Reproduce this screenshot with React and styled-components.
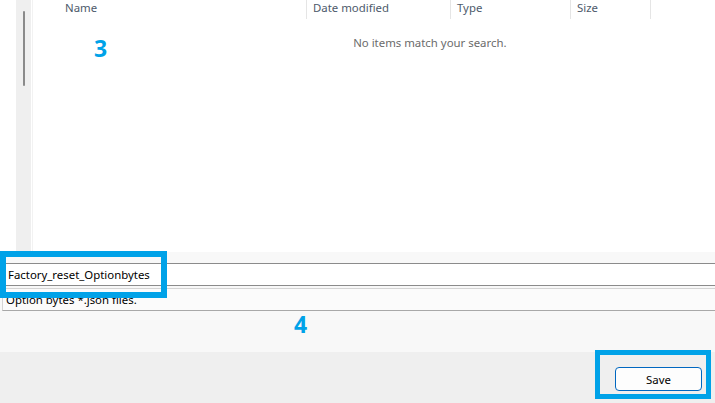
import React from 'react';
import styled, { createGlobalStyle } from 'styled-components';

const GlobalStyle = createGlobalStyle`
  html, body {
    margin: 0;
    padding: 0;
    background: #ffffff;
  }
  body {
    font-family: "Noto Sans", "Open Sans", sans-serif;
    font-size: 11.4px;
  }
`;

const columns = [
  { label: 'Name', width: 274, pad: 32 },
  { label: 'Date modified', width: 144, pad: 6 },
  { label: 'Type', width: 120, pad: 6 },
  { label: 'Size', width: 80, pad: 6 },
];

const Dialog = styled.div`
  position: relative;
  width: 715px;
  height: 403px;
  overflow: hidden;
  display: flex;
  flex-direction: column;
  background: #ffffff;
`;

const Browser = styled.div`
  height: 252px;
  display: flex;
`;

const NavGap = styled.div`
  width: 16px;
  background: #ffffff;
`;

const ScrollTrack = styled.div`
  width: 16px;
  background: #efefef;
  display: flex;
  justify-content: center;
  padding-top: 11px;
  box-sizing: border-box;
  border-right: 1px solid #ffffff;
`;

const ScrollThumb = styled.div`
  width: 2px;
  height: 75px;
  border-radius: 1px;
  background: #8a8a8a;
  margin-left: 1px;
`;

const Divider = styled.div`
  width: 1px;
  background: #f2f2f2;
`;

const Listing = styled.div`
  flex: 1;
  display: flex;
  flex-direction: column;
`;

const HeaderRow = styled.div`
  display: flex;
  height: 19px;
`;

const HeaderCell = styled.div`
  width: ${(p) => p.$width}px;
  padding-left: ${(p) => p.$pad}px;
  box-sizing: border-box;
  border-right: 1px solid #e5e5e5;
  color: #4d5a6b;
  font-size: 11.4px;
  line-height: 15px;
  white-space: nowrap;
`;

const Body = styled.div`
  display: flex;
  align-items: flex-start;
  padding-top: 14px;
`;

const Marker = styled.div`
  color: #00a2e8;
  font-family: "Open Sans", "Noto Sans", sans-serif;
  font-weight: 700;
  font-size: 23px;
  line-height: 30px;
`;

const EmptyMessage = styled.div`
  color: #6b6b6b;
  font-size: 11.4px;
  line-height: 16px;
  padding-top: 2px;
  margin-left: 246px;
`;

const FormPanel = styled.div`
  height: 100px;
  background: #f8f8f8;
  padding-top: 11px;
  box-sizing: border-box;
  display: flex;
  flex-direction: column;
  gap: 2px;
`;

const NameInput = styled.div`
  height: 23px;
  box-sizing: border-box;
  margin-left: 2px;
  background: #ffffff;
  border-top: 1px solid #8b8b8b;
  border-bottom: 1px solid #8b8b8b;
  border-left: 1px solid #8b8b8b;
  padding-left: 5px;
  color: #000000;
  font-size: 11.4px;
  line-height: 21px;
  white-space: nowrap;
`;

const TypeSelect = styled.div`
  height: 23px;
  box-sizing: border-box;
  margin-left: 2px;
  background: #fbfbfb;
  border-top: 1px solid #d4d4d4;
  border-bottom: 1px solid #a8a8a8;
  border-left: 1px solid #d4d4d4;
  padding-left: 3px;
  color: #000000;
  font-size: 11.4px;
  line-height: 21px;
  white-space: nowrap;
`;

const StepRow = styled.div`
  padding-left: 294px;
  margin-top: -4px;
`;

const ActionBar = styled.div`
  flex: 1;
  background: #efefef;
  display: flex;
  justify-content: flex-end;
  align-items: flex-start;
  padding: 15px 13px 0 0;
`;

const SaveButton = styled.button`
  width: 87px;
  height: 24px;
  box-sizing: border-box;
  background: #fdfdfd;
  border: 1px solid #0067c0;
  border-radius: 4px;
  color: #000000;
  font-family: "Noto Sans", "Open Sans", sans-serif;
  font-size: 11.4px;
  padding: 0;
`;

const Highlight = styled.div`
  position: absolute;
  left: ${(p) => p.$x}px;
  top: ${(p) => p.$y}px;
  width: ${(p) => p.$w}px;
  height: ${(p) => p.$h}px;
  box-sizing: border-box;
  border: ${(p) => p.$t}px solid #00a2e8;
  pointer-events: none;
`;

export default function App() {
  return (
    <>
      <GlobalStyle />
      <Dialog>
        <Browser>
          <NavGap />
          <ScrollTrack>
            <ScrollThumb />
          </ScrollTrack>
          <Divider />
          <Listing>
            <HeaderRow>
              {columns.map((c) => (
                <HeaderCell key={c.label} $width={c.width} $pad={c.pad}>
                  {c.label}
                </HeaderCell>
              ))}
            </HeaderRow>
            <Body>
              <Marker style={{ marginLeft: 61 }}>3</Marker>
              <EmptyMessage>No items match your search.</EmptyMessage>
            </Body>
          </Listing>
        </Browser>
        <FormPanel>
          <NameInput>Factory_reset_Optionbytes</NameInput>
          <TypeSelect>Option bytes *.json files.</TypeSelect>
          <StepRow>
            <Marker>4</Marker>
          </StepRow>
        </FormPanel>
        <ActionBar>
          <SaveButton>Save</SaveButton>
        </ActionBar>
        <Highlight $x={0} $y={251} $w={167} $h={47} $t={6} />
        <Highlight $x={595} $y={350} $w={116} $h={49} $t={5} />
      </Dialog>
    </>
  );
}
